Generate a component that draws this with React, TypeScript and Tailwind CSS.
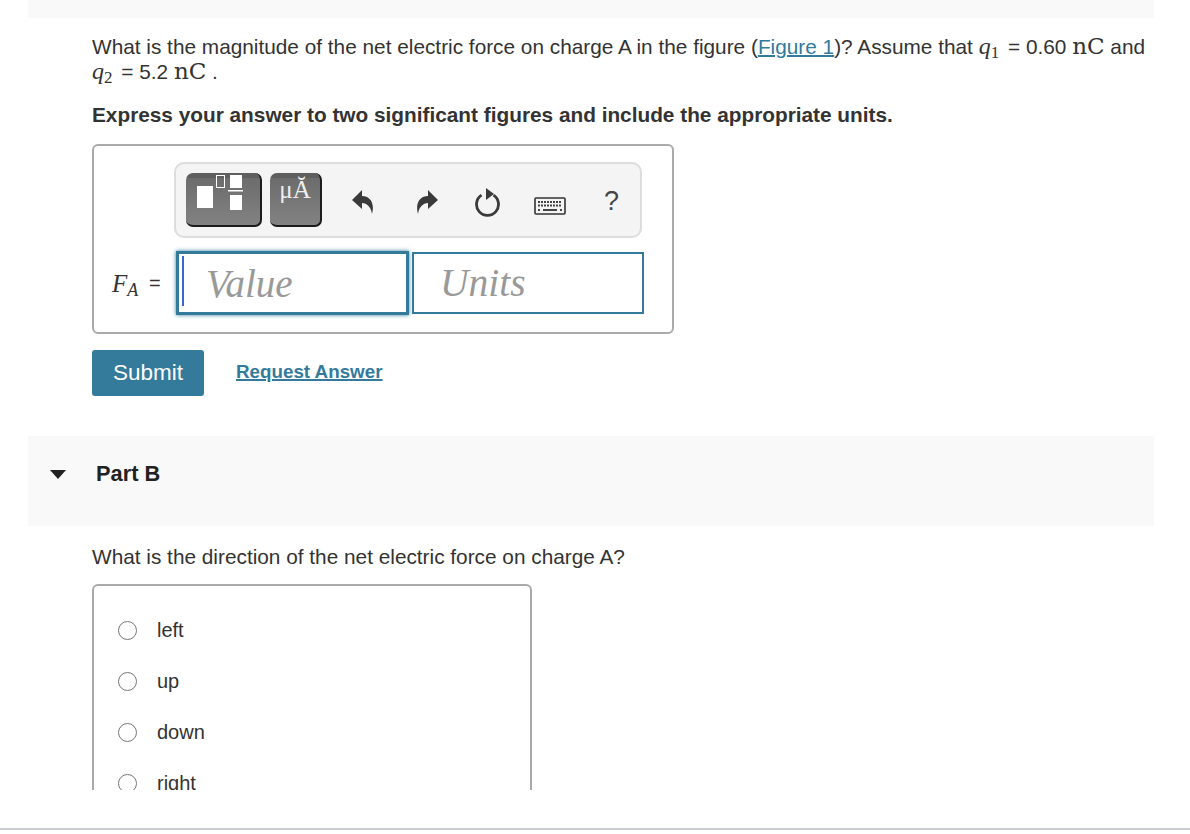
const font = "[font-family:'Liberation_Sans',Arial,sans-serif]";

// Variable en cursiva con subíndice
function MathVar({ name, sub, className = "" }: { name: string; sub: string; className?: string }) {
  return (
    <span className={`font-['Liberation_Serif',serif] whitespace-nowrap leading-none mr-[3px] ${className}`}>
      <i className="text-[24px] leading-none">{name}</i>
      <span className="relative top-[4px] text-[17px] leading-none">{sub}</span>
    </span>
  );
}

function Unit() {
  return <span className="font-['DejaVu_Serif',serif] text-[23px] leading-none">nC</span>;
}

function TemplatesIcon() {
  return (
    <svg width="76" height="54" viewBox="0 0 76 54" className="absolute left-0 top-0">
      <rect x="11" y="13" width="16" height="22" fill="#fff" />
      <rect x="30.5" y="2.5" width="8" height="12" fill="none" stroke="#fff" strokeWidth="1" />
      <rect x="44" y="2" width="12" height="13" fill="#fff" />
      <rect x="42" y="17" width="15" height="1.5" fill="#fff" />
      <rect x="44" y="22" width="12" height="15" fill="#fff" />
    </svg>
  );
}

function ToolbarIcons() {
  return (
    <div className="flex items-center h-[72px] ml-[30px]">
      {/* deshacer */}
      <svg width="22" height="24" viewBox="0 0 22 24" fill="#3a3a3a" className="mt-[4px]">
        <path d="M0 10 L10 0 V6 C18 6 23 13 20 24 C19 17 15 13 10 13 V19 Z" />
      </svg>
      {/* rehacer */}
      <svg width="22" height="24" viewBox="0 0 22 24" fill="#3a3a3a" className="ml-[42px] mt-[4px]">
        <path d="M22 10 L12 0 V6 C4 6 -1 13 2 24 C3 17 7 13 12 13 V19 Z" />
      </svg>
      {/* reiniciar */}
      <svg width="26" height="30" viewBox="0 0 26 30" fill="none" className="ml-[37px] mt-[5px]">
        <path d="M6.5 7.2 A11 11 0 1 0 18.5 7.2" stroke="#3a3a3a" strokeWidth="2.8" />
        <path d="M11 0 L19 6 L11 12 Z" fill="#3a3a3a" />
      </svg>
      {/* teclado */}
      <svg width="32" height="18" viewBox="0 0 32 18" className="ml-[33px] mt-[12px]">
        <rect x="1" y="1" width="30" height="16" rx="1" fill="#f4f4f4" stroke="#333" strokeWidth="1.6" />
        <path d="M4 5 H28 M4 8.5 H28" stroke="#444" strokeWidth="2" strokeDasharray="2 1" />
        <path d="M4 13 H6 M9 13 H23 M26 13 H28" stroke="#444" strokeWidth="2" />
      </svg>
      <span className="ml-[38px] mt-[3px] text-[27px] leading-none text-[#444]">?</span>
    </div>
  );
}

function Option({ label }: { label: string }) {
  return (
    <div className="flex items-center h-[51px] text-[20px]">
      <span className="w-[19px] h-[19px] rounded-full border-[1.5px] border-[#777] bg-white" />
      <span className="ml-[20px]">{label}</span>
    </div>
  );
}

export default function App() {
  return (
    <div className={`h-[834px] w-[1190px] overflow-hidden bg-white text-[20.8px] leading-[25px] text-[#333] ${font}`}>
      <div className="h-[790px] overflow-hidden">
        <div className="ml-[28px] w-[1126px] h-[18px] bg-[#f9f9f9]" />

        <div className="ml-[92px] mt-[16px] w-[1070px]">
          <p>
            What is the magnitude of the net electric force on charge A in the figure (
            <a className="text-[#337a9b] underline decoration-[1.5px]">Figure 1</a>)? Assume that{" "}
            <MathVar name="q" sub="1" /> = 0.60 <Unit /> and
            <br />
            <MathVar name="q" sub="2" /> = 5.2 <Unit /> .
          </p>
          <p className="mt-[18px] font-bold">Express your answer to two significant figures and include the appropriate units.</p>

          <div className="mt-[17px] w-[582px] h-[190px] rounded-[6px] border-2 border-[#aaa]">
            <div className="ml-[80px] mt-[16px] w-[468px] h-[76px] rounded-[10px] border-2 border-[#ddd] bg-[#f4f4f4] flex items-center pl-[10px]">
              <div className="relative w-[76px] h-[54px] rounded-[7px] bg-[linear-gradient(#5f5f5f_0,#5f5f5f_9%,#6c6c6c_10%,#828282_100%)] border-b-2 border-r-2 border-[#1c1c1c]">
                <TemplatesIcon />
              </div>
              <div className="relative ml-[8px] w-[52px] h-[54px] rounded-[7px] bg-[linear-gradient(#5f5f5f_0,#5f5f5f_9%,#6c6c6c_10%,#828282_100%)] border-b-2 border-r-2 border-[#1c1c1c] flex justify-center">
                <span className="font-['Liberation_Serif',serif] text-[25px] leading-[34px] text-[#eee]">μĂ</span>
              </div>
              <ToolbarIcons />
            </div>

            <div className="flex items-center mt-[13px] ml-[18px]">
              <span className="font-['Liberation_Serif',serif] italic text-[25px] leading-none w-[28px] whitespace-nowrap">
                F<sub className="text-[18px] leading-none">A</sub>
              </span>
              <span className="ml-[9px] text-[20px] w-[27px]">=</span>
              <div className="relative w-[233px] h-[64px] border-[3px] border-[#337a9b] shadow-[0_0_4px_#337a9b] flex items-center bg-white">
                <span className="absolute left-[3px] top-[2px] w-[2px] h-[50px] bg-[#3b66cf]" />
                <span className="ml-[27px] font-['Liberation_Serif',serif] italic text-[39px] text-[#999]">Value</span>
              </div>
              <div className="ml-[3px] w-[232px] h-[62px] border-2 border-[#337a9b] flex items-center">
                <span className="ml-[26px] font-['Liberation_Serif',serif] italic text-[39.5px] text-[#999]">Units</span>
              </div>
            </div>
          </div>

          <div className="flex items-center mt-[16px]">
            <button className="w-[112px] h-[46px] pb-[2px] rounded-[3px] bg-[#337a9b] text-[22.5px] text-white">Submit</button>
            <a className="ml-[32px] mb-[3px] text-[18.8px] font-bold text-[#337a9b] underline decoration-2">Request Answer</a>
          </div>
        </div>

        <div className="ml-[28px] mt-[40px] w-[1126px] h-[90px] bg-[#f9f9f9] flex items-start pt-[25px]">
          <svg width="16" height="10" viewBox="0 0 16 10" className="ml-[22px] mt-[9px]">
            <path d="M0 0 H16 L8 9 Z" fill="#222" />
          </svg>
          <span className="ml-[30px] text-[21.8px] font-bold text-[#222]">Part B</span>
        </div>

        <div className="ml-[92px]">
          <p className="mt-[18px]">What is the direction of the net electric force on charge A?</p>
          <div className="mt-[15px] w-[440px] h-[300px] rounded-t-[6px] border-2 border-[#aaa] pl-[24px] pt-[19px]">
            <Option label="left" />
            <Option label="up" />
            <Option label="down" />
            <Option label="right" />
          </div>
        </div>
      </div>
      <div className="mt-[38px] h-[2px] bg-[#c8ccd0]" />
    </div>
  );
}
